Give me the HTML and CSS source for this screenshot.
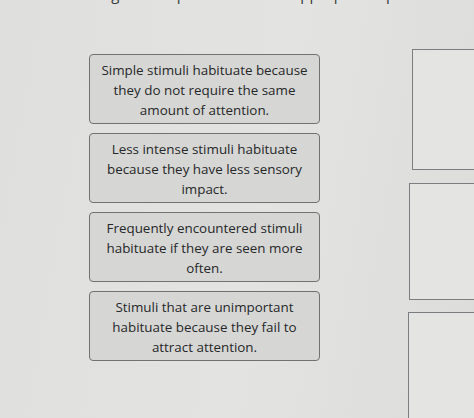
FILE: index.html
```html
<!DOCTYPE html>
<html lang="en">
<head>
  <meta charset="UTF-8" />
  <title>Habituation matching</title>
  <link rel="stylesheet" href="styles.css">
</head>
<body>
  <p class="prompt">Drag each explanation to the appropriate space below.</p>

  <div class="board">
    <div class="choices">
      <div class="card">Simple stimuli habituate because they do not require the same amount of attention.</div>
      <div class="card">Less intense stimuli habituate because they have less sensory impact.</div>
      <div class="card">Frequently encountered stimuli habituate if they are seen more often.</div>
      <div class="card">Stimuli that are unimportant habituate because they fail to attract attention.</div>
    </div>

    <div class="targets">
      <div class="drop drop-1"></div>
      <div class="drop drop-2"></div>
      <div class="drop drop-3"></div>
    </div>
  </div>
</body>
</html>
```

FILE: styles.css
```css
html, body {
  height: 100%;
}

body {
  font-family: "Open Sans", "Liberation Sans", sans-serif;
  margin: 0;
  overflow: hidden;
  background: linear-gradient(100deg, #dfe0de 0%, #e3e4e2 55%, #dcdddb 100%);
  color: #262729;
}

.prompt {
  margin: -16px 0 0 86px;
  font-size: 15px;
  line-height: 20px;
  color: #3a3b3d;
  white-space: nowrap;
}

.board {
  display: flex;
  align-items: flex-start;
  padding-top: 45px;
}

.choices {
  flex-shrink: 0;
  display: flex;
  flex-direction: column;
  gap: 9px;
  width: 231px;
  margin-left: 89px;
  margin-top: 5px;
}

.card {
  box-sizing: border-box;
  height: 70px;
  padding: 5px 6px;
  background-color: #d6d7d5;
  border: 1px solid #6f7173;
  border-radius: 4px;
  font-size: 13.4px;
  line-height: 20px;
  text-align: center;
}

.targets {
  flex-shrink: 0;
  display: flex;
  flex-direction: column;
  margin-left: 90px;
}

.drop {
  width: 90px;
  background-color: #e4e5e3;
  border: 1px solid #7b7e80;
}

.drop-1 {
  height: 119px;
  margin-left: 2px;
}

.drop-2 {
  height: 115px;
  margin-top: 13px;
  margin-left: -1px;
}

.drop-3 {
  height: 120px;
  margin-top: 12px;
  margin-left: -2px;
}
```
